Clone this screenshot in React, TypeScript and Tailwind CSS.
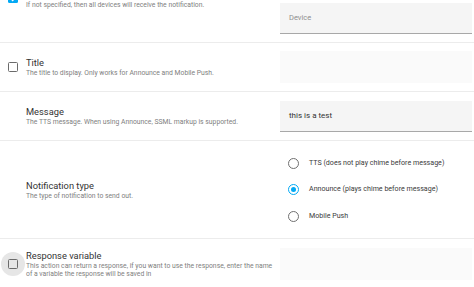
import type { ReactNode } from "react";

function Checkbox({ checked, halo }: { checked?: boolean; halo?: boolean }) {
  return (
    <div className="relative flex h-[26px] w-[26px] shrink-0 items-center justify-center">
      {halo && <div className="absolute left-[1px] top-[1px] h-[24px] w-[24px] rounded-full bg-[#e6e6e6]" />}
      {checked ? (
        <div className="relative flex h-[10px] w-[10px] items-center justify-center rounded-[1.5px] bg-[#03a9f4]">
          <svg viewBox="0 0 10 10" className="h-[9px] w-[9px]">
            <path d="M2 5.2 L4.1 7.2 L8 3" fill="none" stroke="white" strokeWidth="1.4" />
          </svg>
        </div>
      ) : (
        <div className="relative h-[10px] w-[10px] rounded-[1.5px] border-[1.5px] border-[#6b6b6b]" />
      )}
    </div>
  );
}

function Radio({ checked, label }: { checked?: boolean; label: string }) {
  return (
    <div className="flex h-[26.5px] items-center">
      <div
        className={
          checked
            ? "flex h-[11px] w-[11px] items-center justify-center rounded-full border-[1.5px] border-[#03a9f4]"
            : "h-[11px] w-[11px] rounded-full border-[1.5px] border-[#707070]"
        }
      >
        {checked && <div className="h-[5px] w-[5px] rounded-full bg-[#03a9f4]" />}
      </div>
      <span className="ml-[10px] text-[7.1px] text-[#3a3a3a]">{label}</span>
    </div>
  );
}

function Field({ value, placeholder, disabled }: { value?: string; placeholder?: string; disabled?: boolean }) {
  return (
    <div
      className={
        disabled
          ? "flex h-[32px] w-[192px] items-center bg-[#fafafa] px-[9px]"
          : "flex h-[31px] w-[192px] items-center border-b border-[#a8a8a8] bg-[#f5f5f5] px-[9px]"
      }
    >
      {value ? (
        <span className="text-[8px] text-[#333333]">{value}</span>
      ) : (
        <span className="text-[7.5px] text-[#8f8f8f]">{placeholder}</span>
      )}
    </div>
  );
}

function Row({
  label,
  desc,
  check,
  children,
  className = "h-[49px]",
  textClass = "",
  checkClass = "",
}: {
  label: string;
  desc: ReactNode;
  check?: ReactNode;
  children: ReactNode;
  className?: string;
  textClass?: string;
  checkClass?: string;
}) {
  return (
    <div className={`flex items-center border-b border-[#ececec] pr-[2px] ${className}`}>
      <div className={`flex w-[26px] shrink-0 justify-center ${checkClass}`}>{check}</div>
      <div className={`flex min-w-0 flex-1 flex-col pr-[6px] ${textClass}`}>
        <div className="text-[9.3px] leading-[13px] text-[#333333]">{label}</div>
        <div className="text-[6.8px] leading-[8.5px] text-[#808080]">{desc}</div>
      </div>
      {children}
    </div>
  );
}

export default function App() {
  return (
    <div className="h-[287px] w-[474px] overflow-hidden bg-white" style={{ fontFamily: "Roboto, sans-serif" }}>
      <div className="-mt-[6px]">
        <Row
          label="Device"
          check={<Checkbox checked />}
          checkClass="self-start -mt-[9px]"
          textClass="self-start -mt-[6px]"
          desc="If not specified, then all devices will receive the notification."
        >
          <Field placeholder="Device" />
        </Row>
        <Row label="Title" check={<Checkbox />} desc="The title to display. Only works for Announce and Mobile Push.">
          <Field disabled />
        </Row>
        <Row label="Message" desc="The TTS message. When using Announce, SSML markup is supported.">
          <Field value="this is a test" />
        </Row>
        <Row label="Notification type" desc="The type of notification to send out." className="h-[98px]">
          <div className="flex w-[192px] flex-col pl-[8px]">
            <Radio label="TTS (does not play chime before message)" />
            <Radio checked label="Announce (plays chime before message)" />
            <Radio label="Mobile Push" />
          </div>
        </Row>
        <Row
          label="Response variable"
          check={<Checkbox halo />}
          desc="This action can return a response, if you want to use the response, enter the name of a variable the response will be saved in"
          className="h-[49px] border-b-0"
        >
          <Field disabled />
        </Row>
      </div>
    </div>
  );
}
